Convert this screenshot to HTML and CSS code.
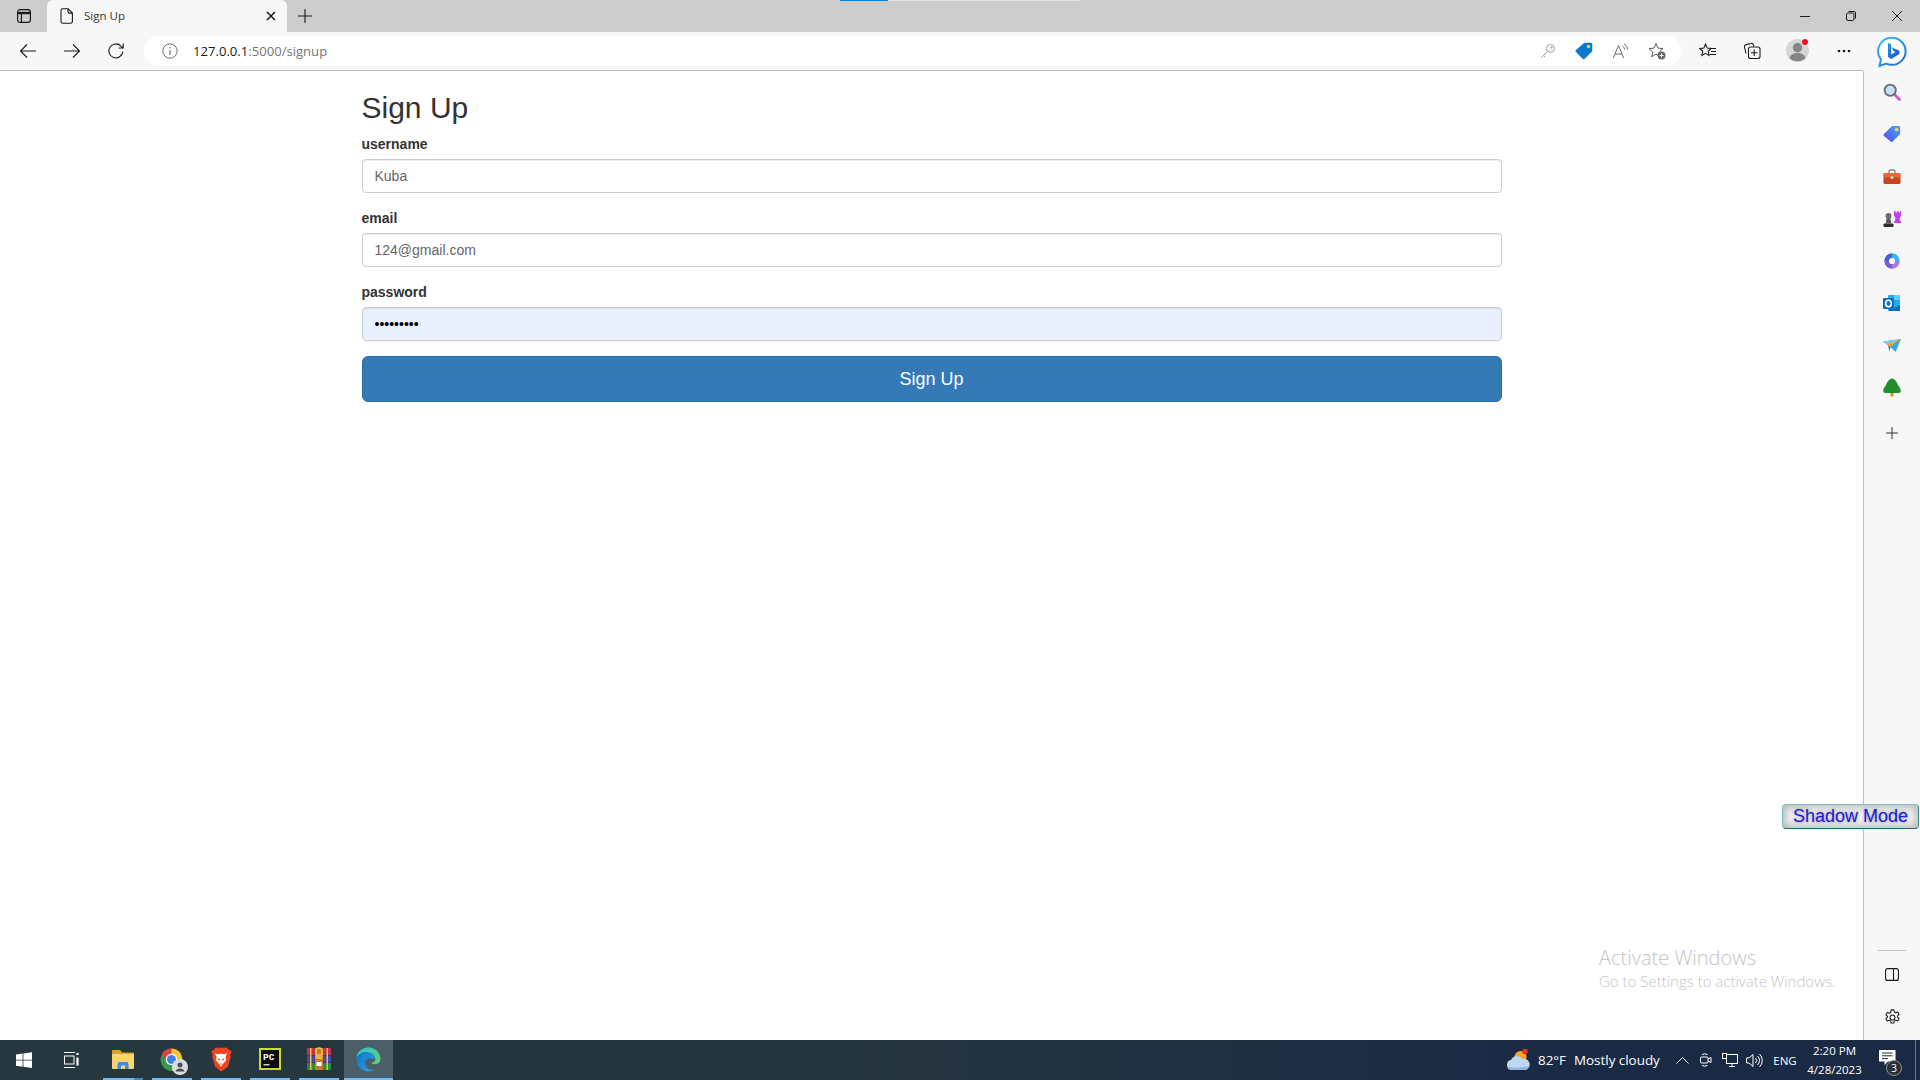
FILE: index.html
```html
<!DOCTYPE html>
<html lang="en">
<head>
<meta charset="utf-8">
<title>Sign Up</title>
<link rel="stylesheet" href="styles.css">
</head>
<body>
<div class="window">

  <header class="tabstrip">
    <div class="progress"><span class="progress-done"></span><span class="progress-rest"></span></div>
    <div class="tab-toggle">
      <svg width="16" height="16" viewBox="0 0 16 16" fill="none" stroke="#1a1a1a" stroke-width="1.2"><rect x="1.6" y="1.6" width="12.8" height="12.8" rx="2.4"/><path d="M1.6 5h12.8" stroke-width="2.4"/><path d="M5.4 5v9.4"/></svg>
    </div>
    <div class="tab">
      <svg class="tab-file" width="14" height="16" viewBox="0 0 14 16" fill="none" stroke="#1a1a1a" stroke-width="1.1"><path d="M2.6.8h5.6L12.4 5v8.6a1.6 1.6 0 0 1-1.6 1.6H2.6A1.6 1.6 0 0 1 1 13.6V2.4A1.6 1.6 0 0 1 2.6.8z"/><path d="M8 1v2.8A1.3 1.3 0 0 0 9.300 5.100h3"/></svg>
      <span class="tab-title">Sign Up</span>
      <svg class="tab-close" width="10" height="10" viewBox="0 0 10 10" stroke="#1a1a1a" stroke-width="1.5"><path d="M1 1l8 8M9 1l-8 8"/></svg>
    </div>
    <div class="tab-new">
      <svg width="16" height="16" viewBox="0 0 16 16" stroke="#1a1a1a" stroke-width="1.1"><path d="M8 1v14M1 8h14"/></svg>
    </div>
    <div class="window-controls">
      <svg width="46" height="12" viewBox="0 0 12 12" stroke="#1a1a1a" stroke-width="1"><path d="M1 6.500h10"/></svg>
      <svg width="46" height="12" viewBox="0 0 12 12" fill="none" stroke="#1a1a1a" stroke-width="1"><rect x="1.500" y="3" width="7.500" height="7.500" rx="1.500"/><path d="M3.500 1.500h5.500a1.500 1.500 0 0 1 1.500 1.500v5.500"/></svg>
      <svg width="46" height="12" viewBox="0 0 12 12" stroke="#1a1a1a" stroke-width="1"><path d="M1 1l10 10M11 1L1 11"/></svg>
    </div>
  </header>

  <div class="toolbar">
    <div class="toolbar-main">
      <div class="tool">
        <svg width="18" height="16" viewBox="0 0 18 16" fill="none" stroke="#1a1a1a" stroke-width="1.1"><path d="M17 8H1.500M8 1.500L1.500 8 8 14.500"/></svg>
      </div>
      <div class="tool">
        <svg width="18" height="16" viewBox="0 0 18 16" fill="none" stroke="#1a1a1a" stroke-width="1.1"><path d="M1 8h15.500M10 1.500L16.500 8 10 14.500"/></svg>
      </div>
      <div class="tool">
        <svg width="18" height="18" viewBox="0 0 18 18" fill="none" stroke="#1a1a1a" stroke-width="1.1"><path d="M15.800 9.500A7 7 0 1 1 14 4.200L16 6"/><path d="M16.200 1.500V6h-4.500"/></svg>
      </div>
      <div class="address">
        <svg class="addr-info" width="16" height="16" viewBox="0 0 16 16" fill="none" stroke="#707070" stroke-width="1"><circle cx="8" cy="8" r="7.200"/><path d="M8 7v5M8 4v1.400" stroke-width="1.200"/></svg>
        <span class="url"><span class="url-host">127.0.0.1</span>:5000/signup</span>
        <div class="addr-icons">
          <span class="addr-icon">
            <svg width="16" height="16" viewBox="0 0 16 16" fill="none" stroke="#9a9a9a" stroke-width="1"><circle cx="10.500" cy="5.500" r="4"/><circle cx="11.500" cy="4.500" r=".7"/><path d="M7.500 8.500L1.500 14.500M3.500 12.500l1.500 1.500"/></svg>
          </span>
          <span class="addr-icon">
            <svg width="18" height="18" viewBox="0 0 18 18"><path d="M9.800.800h6a1.500 1.500 0 0 1 1.500 1.500v6a2 2 0 0 1-.6 1.400l-7 7a1.500 1.500 0 0 1-2.100 0L1 10.100a1.500 1.500 0 0 1 0-2.100l7.400-6.600a2 2 0 0 1 1.400-.6z" fill="#0a78d0"/><circle cx="13.500" cy="4.500" r="1.700" fill="#ffd23f"/></svg>
          </span>
          <span class="addr-icon">
            <svg width="16" height="16" viewBox="0 0 16 16" fill="none" stroke="#6a6a6a" stroke-width="1"><path d="M.3 15L5.500 2.500 10.700 15M2 11h7"/><path d="M9.500 3a4.500 4.500 0 0 1 2.200 3.700M11 .8a7 7 0 0 1 3.700 6"/></svg>
          </span>
          <span class="addr-icon">
            <svg width="18" height="18" viewBox="0 0 18 18" fill="none"><path d="M8 1.500l2 4.600 5 .5-3.700 3.300 1 4.800L8 12.200l-4.300 2.500 1-4.800L1 6.600l5-.5z" stroke="#5a5a5a" stroke-width="1"/><circle cx="13.500" cy="13.500" r="4" fill="#6a6a6a"/><path d="M13.500 11.500v4M11.500 13.500h4" stroke="#fff" stroke-width="1"/></svg>
          </span>
        </div>
      </div>
      <div class="tool">
        <svg width="18" height="16" viewBox="0 0 18 16" fill="none" stroke="#1a1a1a" stroke-width="1.100"><path d="M6.500 1.200l1.700 3.900 4 .4-3 2.800.9 4.100-3.600-2.100-3.600 2.100.9-4.100-3-2.800 4-.4z"/><path d="M12 5.500h5M12 8.500h5M11 11.500h6"/></svg>
      </div>
      <div class="tool">
        <svg width="18" height="18" viewBox="0 0 18 18" fill="none" stroke="#1a1a1a" stroke-width="1.100"><path d="M3 11.500L1.500 5a2 2 0 0 1 1.500-2.400l5-1.100a2 2 0 0 1 2.400 1.400l.4 1.500"/><rect x="5.500" y="5" width="11.500" height="11.500" rx="2"/><path d="M11.200 7.500v6.500M8 10.800h6.500"/></svg>
      </div>
      <div class="tool tool-wide">
        <span class="avatar">
          <svg width="23" height="23" viewBox="0 0 23 23"><circle cx="11.500" cy="11.500" r="11.500" fill="#d6d6d6"/><circle cx="11.500" cy="8.800" r="4.700" fill="#858585"/><path d="M3.500 19c1-3.500 4-5 8-5s7 1.500 8 5a11.500 11.500 0 0 1-16 0z" fill="#858585"/></svg>
          <span class="avatar-dot"></span>
        </span>
      </div>
      <div class="tool tool-more">
        <svg width="14" height="4" viewBox="0 0 14 4" fill="#1a1a1a"><circle cx="2" cy="2" r="1.300"/><circle cx="7" cy="2" r="1.300"/><circle cx="12" cy="2" r="1.300"/></svg>
      </div>
    </div>
    <div class="toolbar-bing">
      <svg width="32" height="32" viewBox="0 0 32 32" fill="none">
        <defs>
          <linearGradient id="bingRing" x1="0" y1="0" x2="1" y2="1"><stop offset="0" stop-color="#35c1f1"/><stop offset="1" stop-color="#1b66d8"/></linearGradient>
          <linearGradient id="bingB" x1="0" y1="0" x2="1" y2="1"><stop offset="0" stop-color="#1b9de2"/><stop offset="1" stop-color="#2548d8"/></linearGradient>
        </defs>
        <path d="M16 1.800a13.600 13.600 0 0 1 13.600 13.500A13.600 13.600 0 0 1 16 28.800c-2 0-4-.4-5.700-1.200L3.500 30l1.500-6.400A13.500 13.500 0 0 1 16 1.800z" fill="#fff" stroke="url(#bingRing)" stroke-width="2"/>
        <path d="M12 7l3.200 1.200v10.300l4.400-2.600-2.300-1-1.300-3.400 7.300 3.100v3.300l-8.100 5-3.200-1.900z" fill="url(#bingB)"/>
      </svg>
    </div>
  </div>

  <div class="body-row">
    <main class="page">
      <div class="container">
        <h2 class="page-title">Sign Up</h2>
        <form class="signup-form">
          <div class="form-group">
            <label class="form-label" for="username">username</label>
            <input class="form-control" id="username" type="text" value="Kuba">
          </div>
          <div class="form-group">
            <label class="form-label" for="email">email</label>
            <input class="form-control" id="email" type="text" value="124@gmail.com">
          </div>
          <div class="form-group">
            <label class="form-label" for="password">password</label>
            <input class="form-control form-control-filled" id="password" type="password" value="123456789">
          </div>
          <button class="btn-submit" type="button">Sign Up</button>
        </form>
      </div>
      <div class="watermark">
        <div class="watermark-title">Activate Windows</div>
        <div class="watermark-sub">Go to Settings to activate Windows.</div>
      </div>
    </main>

    <aside class="sidebar">
      <div class="side-item">
        <svg width="18" height="18" viewBox="0 0 18 18"><path d="M11 11l5.500 5.500" stroke="#d34fd6" stroke-width="2.600" stroke-linecap="round"/><circle cx="7.200" cy="7.200" r="5.600" fill="#bfe3f5" stroke="#6b6b6b" stroke-width="1.800"/></svg>
      </div>
      <div class="side-item">
        <svg width="18" height="18" viewBox="0 0 18 18"><defs><linearGradient id="tagG" x1="1" y1="0" x2="0" y2="1"><stop offset="0" stop-color="#4aa5f5"/><stop offset="1" stop-color="#4a4cf0"/></linearGradient></defs><path d="M10 1h6a1.200 1.200 0 0 1 1.200 1.200v6a2 2 0 0 1-.6 1.400l-7 7a1.300 1.300 0 0 1-1.900 0L1 10.900a1.300 1.300 0 0 1 0-1.900l7.600-7.400A2 2 0 0 1 10 1z" fill="url(#tagG)"/><circle cx="13.600" cy="4.600" r="1.800" fill="#ffd23f"/></svg>
      </div>
      <div class="side-item">
        <svg width="18" height="16" viewBox="0 0 18 16"><path d="M6 4V2.500A1.500 1.500 0 0 1 7.500 1h3A1.500 1.500 0 0 1 12 2.500V4" fill="none" stroke="#8a8a8a" stroke-width="1.400"/><rect x=".5" y="4" width="17" height="11" rx="1.500" fill="#c5461f"/><rect x=".5" y="4" width="17" height="4.500" rx="1.500" fill="#e36a33"/><circle cx="9" cy="8.500" r="1.500" fill="#d9d9d9"/></svg>
      </div>
      <div class="side-item">
        <svg width="18" height="18" viewBox="0 0 18 18"><path d="M11 1h1.500v1.500h1.500V1h1.500v1.500H17V1h1v5l-1.200 1.200v3.800H18v2h-7v-2h1.200V7.200L11 6z" fill="#c43df0"/><circle cx="5.500" cy="6" r="3" fill="#6d6d6d"/><path d="M3.500 8.500h4l.7 5H2.800z" fill="#5a5a5a"/><rect x=".5" y="13.500" width="10" height="3.500" rx="1" fill="#2f2f2f"/></svg>
      </div>
      <div class="side-item">
        <svg width="18" height="18" viewBox="0 0 18 18" fill="none"><path d="M9 3.600A5.400 5.400 0 0 0 3.600 9" stroke="#4a5fd0" stroke-width="4.600"/><path d="M9 3.600A5.400 5.400 0 0 1 14.400 9" stroke="#33b6ea" stroke-width="4.600"/><path d="M14.400 9A5.400 5.400 0 0 1 9 14.400" stroke="#a67ae0" stroke-width="4.600"/><path d="M9 14.400A5.400 5.400 0 0 1 3.600 9" stroke="#7a5cd8" stroke-width="4.600"/></svg>
      </div>
      <div class="side-item">
        <svg width="18" height="18" viewBox="0 0 18 18"><rect x="5" y="1" width="12" height="16" rx="1" fill="#28a8ea"/><rect x="11" y="1" width="6" height="5" fill="#50d9ff"/><path d="M6 11l5.500 3 5.500-3v5.500a.500.500 0 0 1-.5.500H6z" fill="#0a6cbf"/><rect x="0" y="4" width="11" height="11" rx="1" fill="#0f6fc6"/><ellipse cx="5.500" cy="9.500" rx="2.800" ry="3.200" fill="none" stroke="#fff" stroke-width="1.500"/></svg>
      </div>
      <div class="side-item">
        <svg width="18" height="16" viewBox="0 0 18 16"><path d="M0 3.500L18 1l-5.500 13-5-5z" fill="#35a7ec"/><path d="M18 1L7.500 9l-1 4.500-1.500-6z" fill="#1b78c9"/><path d="M0 3.500L18 1 5 7.500z" fill="#7ccaf5"/><path d="M4 6.500L18 1 7 9z" fill="#f5a623"/></svg>
      </div>
      <div class="side-item">
        <svg width="18" height="19" viewBox="0 0 18 19"><path d="M9 .5c2.500 0 5 3.800 6 6.500 1.500 2 2.800 4 2.800 6 0 1.200-1 2-2.300 2H2.500C1.200 15 .2 14.200.2 13c0-2 1.300-4 2.800-6C4 4.300 6.500.5 9 .5z" fill="#1f8f2e"/><rect x="7.500" y="15" width="3" height="3.500" fill="#e08a1a"/></svg>
      </div>
      <div class="side-item side-add">
        <svg width="12" height="12" viewBox="0 0 12 12" stroke="#333" stroke-width="1"><path d="M6 0v12M0 6h12"/></svg>
      </div>
      <div class="side-bottom">
        <div class="side-divider"></div>
        <div class="side-item">
          <svg width="14" height="13" viewBox="0 0 14 13" fill="none" stroke="#1a1a1a" stroke-width="1.100"><rect x=".6" y=".6" width="12.800" height="11.800" rx="2"/><path d="M8.500 .6v11.800"/></svg>
        </div>
        <div class="side-item side-gear">
          <svg width="17" height="17" viewBox="0 0 16 16" fill="none" stroke="#1a1a1a" stroke-width="1"><circle cx="8" cy="8" r="2.300"/><path d="M6.700 .8h2.600l.4 2 1.300.7 1.900-.7 1.300 2.300-1.500 1.300v1.200l1.500 1.300-1.300 2.300-1.900-.7-1.300.7-.4 2H6.700l-.4-2-1.300-.7-1.900.7-1.300-2.300 1.500-1.300V6.900L1.800 5.600l1.300-2.300 1.900.7 1.300-.7z" stroke-linejoin="round"/></svg>
        </div>
      </div>
    </aside>
    <div class="shadow-mode">Shadow Mode</div>
  </div>

  <footer class="taskbar">
    <div class="task-left">
      <div class="task-sys">
        <svg width="16" height="16" viewBox="0 0 16 16" fill="#fff"><path d="M0 2.400l6.600-.9v6.200H0zM7.400 1.400L16 .2v7.500H7.400zM0 8.500h6.600v6.200L0 13.800zM7.400 8.500H16v7.400l-8.600-1.200z"/></svg>
      </div>
      <div class="task-sys">
        <svg width="16" height="16" viewBox="0 0 16 16" fill="none" stroke="#fff" stroke-width="1"><path d="M0 .5h11M0 15.500h11"/><rect x=".5" y="4" width="9.500" height="8"/><path d="M13.500 1v2M13.500 5.500v8" stroke-width="2.200"/></svg>
      </div>
      <div class="task-app task-app-split">
        <svg width="22" height="19" viewBox="0 0 22 19"><path d="M0 1a1 1 0 0 1 1-1h7l2 2.500h11a1 1 0 0 1 1 1V5H0z" fill="#d9a520"/><path d="M0 4h22v14a1 1 0 0 1-1 1H1a1 1 0 0 1-1-1z" fill="#fbd66a"/><path d="M5.500 19v-5l1-2h9l1 2v5h-3.500v-3.500H9V19z" fill="#3a8fe0"/></svg>
      </div>
      <div class="task-app">
        <span class="chrome-icon">
          <svg width="25" height="25" viewBox="0 0 25 25"><path d="M12.500 12.500L3 7a11.500 11.500 0 0 1 9.500-5.500c4.500 0 8 2 10 5.500z" fill="#d8453a"/><path d="M12.500 12.500h11a11.500 11.500 0 0 1-11 11.500z" fill="#f6c63a"/><path d="M12.500 1.500A11.500 11.500 0 0 1 23.500 12.500h-11z" fill="#f6c63a"/><path d="M12.500 1.500A11 11 0 0 0 3 7l4.500 8z" fill="#d8453a"/><path d="M3 7a11.500 11.500 0 0 0 9.500 17l4-7-9-2z" fill="#3a9a4d"/><circle cx="12.500" cy="12.500" r="5.800" fill="#fff"/><circle cx="12.500" cy="12.500" r="4.500" fill="#3f7fe6"/></svg>
          <svg class="chrome-badge" width="16" height="16" viewBox="0 0 16 16"><circle cx="8" cy="8" r="8" fill="#d8dce0"/><circle cx="8" cy="6" r="2.500" fill="#4a4f55"/><path d="M3.500 12.500c.5-2 2.200-3 4.500-3s4 1 4.500 3z" fill="#4a4f55"/></svg>
        </span>
      </div>
      <div class="task-app">
        <svg width="22" height="25" viewBox="0 0 22 25"><path d="M5 .8h12l2 2.500 2.500.5-.5 3-1 1 .8 2-3 10L11 24.500 5.200 19.800l-3-10 .8-2-1-1-.5-3L4 3.300z" fill="#f0431e"/><path d="M11 6.500l3 .8 3-1-1.500 4 .5 3-3 3.500-2 3-2-3-3-3.500.5-3L5 6.300l3 1z" fill="#fff"/><path d="M8 12l2 1M14 12l-2 1M10 17h2" stroke="#f0431e" stroke-width="1.200"/></svg>
      </div>
      <div class="task-app">
        <svg class="pycharm" width="22" height="22" viewBox="0 0 22 22"><rect width="22" height="22" fill="#c9d93a"/><rect x="2" y="2" width="18" height="18" fill="#0b0b0b"/><text class="pycharm-text" x="4" y="12">PC</text><rect x="4.500" y="16" width="6" height="1.500" fill="#ccc"/></svg>
      </div>
      <div class="task-app">
        <svg width="24" height="24" viewBox="0 0 24 24"><rect y="1" width="24" height="7" rx="1" fill="#c2304a"/><rect y="8.500" width="24" height="7" fill="#4a45a8"/><rect y="16" width="24" height="7" rx="1" fill="#2a8a3e"/><rect x="8" y="1" width="8" height="22" fill="#c97a2a"/><rect x="3" y="1" width="1.500" height="22" fill="#e6c04a"/><rect x="19.500" y="1" width="1.500" height="22" fill="#e6c04a"/><path d="M9 8V4a3 3 0 0 1 6 0v4" fill="none" stroke="#f0c24a" stroke-width="1.500"/><rect x="8.500" y="7" width="7" height="5" fill="#f0b23a"/><rect x="9.500" y="15" width="5" height="4" fill="#fff"/></svg>
      </div>
      <div class="task-app task-app-active">
        <svg width="25" height="25" viewBox="0 0 25 25"><defs><linearGradient id="edgeB" x1="0" y1="0" x2="1" y2="1"><stop offset="0" stop-color="#0d6fbf"/><stop offset="1" stop-color="#2fa3e8"/></linearGradient><linearGradient id="edgeG" x1="0" y1="0" x2="1" y2="1"><stop offset="0" stop-color="#2fc3d8"/><stop offset="1" stop-color="#5ed36a"/></linearGradient></defs><path d="M12.500.5A12 12 0 0 0 .5 12.500c0 6.600 5.300 12 12 12 2.800 0 5.300-.9 7.300-2.500-4 1.500-9.700.5-10.800-5-.5-2.800 1.500-5.500 4.800-5.500h6c.5-5-2.800-11.500-7.300-11.500z" fill="url(#edgeB)"/><path d="M12.500.5c-6 0-11 4-12 9.500 2.500-3.500 6-5 9.500-5 6 0 9.500 3.500 9.500 7.500 0 2-2.300 3-4.300 3 .5 1 2 1.700 4 1.700 3.500 0 5.300-2.500 5.300-5.200C24.500 5.500 19 .5 12.500.5z" fill="url(#edgeG)"/></svg>
      </div>
    </div>
    <div class="tray">
      <div class="tray-weather">
        <svg class="weather-icon" width="24" height="24" viewBox="0 0 24 24"><circle cx="14.500" cy="9" r="6" fill="#f5a623"/><circle cx="19" cy="3.500" r="2.800" fill="#d8352a"/><path d="M6 22a5 5 0 0 1-1-9.900A6.500 6.500 0 0 1 16.500 11a5.500 5.500 0 0 1 3 11z" fill="#bcd9f0"/><path d="M1.500 18c3 2 14 2.500 21.500 0-.6 2.500-2 4-3.500 4H6c-2 0-3.800-1.500-4.500-4z" fill="#8fb6dc"/></svg>
        <span class="tray-temp">82°F</span>
        <span class="tray-cond">Mostly cloudy</span>
      </div>
      <div class="tray-cell">
        <svg width="13" height="7" viewBox="0 0 13 7" fill="none" stroke="#fff" stroke-width="1"><path d="M.5 6.500l6-6 6 6"/></svg>
      </div>
      <div class="tray-cell">
        <svg width="12" height="16" viewBox="0 0 12 16" fill="none" stroke="#fff" stroke-width="1"><path d="M2 2.500a6 6 0 0 1 5.500 0M2 13.500a6 6 0 0 0 5.500 0"/><rect x=".5" y="5" width="7.500" height="6" rx="1"/><path d="M8 7l3-1.500v5L8 9"/></svg>
      </div>
      <div class="tray-cell">
        <svg width="16" height="15" viewBox="0 0 16 15" fill="none" stroke="#fff" stroke-width="1"><rect x="4.500" y="1.500" width="11" height="9"/><rect x=".5" y=".5" width="4" height="5" fill="#1b2a44"/><path d="M10 10.500v3M7 13.500h6"/></svg>
      </div>
      <div class="tray-cell tray-cell-vol">
        <svg width="17" height="15" viewBox="0 0 17 15" fill="none" stroke="#fff" stroke-width="1"><path d="M.5 5v5h2.500l4 3.500v-12L3 5z"/><path d="M9.500 5a3.500 3.500 0 0 1 0 5M11.500 3a6 6 0 0 1 0 9M13.500 1a9 9 0 0 1 0 13"/></svg>
      </div>
      <div class="tray-cell tray-eng">ENG</div>
      <div class="tray-clock"><span>2:20 PM</span><span>4/28/2023</span></div>
      <div class="tray-notify">
        <svg width="17" height="16" viewBox="0 0 17 16"><path d="M0 0h16.500v11.500H9L5.500 15v-3.500H0z" fill="#fff"/><path d="M3 3h10.500M3 5.800h10.500M3 8.600h6" stroke="#1b2a44" stroke-width="1"/></svg>
        <span class="notify-badge">3</span>
      </div>
      <div class="show-desktop"></div>
    </div>
  </footer>
</div>
</body>
</html>
```

FILE: styles.css
```css
* { box-sizing: border-box; }
html, body { margin: 0; height: 100%; overflow: hidden; }
body { font-family: "Liberation Sans", Arial, sans-serif; font-size: 14px; color: #333; background: #fff; }

.window { display: flex; flex-direction: column; height: 100vh; position: relative; }

/* tab strip */
.tabstrip { height: 32px; flex: none; background: #ccc; display: flex; align-items: flex-end; position: relative; }
.progress { position: absolute; top: 0; left: 840px; display: flex; height: 1px; }
.progress-done { width: 48px; background: #0a7bd6; }
.progress-rest { width: 193px; background: #e2e2e2; }
.tab-toggle { width: 47px; height: 32px; display: flex; align-items: center; justify-content: center; flex: none; }
.tab { width: 240px; height: 32px; background: #f7f7f7; border-radius: 6px 6px 0 0; display: flex; align-items: center; padding: 0 11px 0 13px; flex: none; }
.tab-file { flex: none; }
.tab-title { font-family: "Open Sans", sans-serif; font-size: 11.500px; line-height: 30px; height: 31px; color: #333; margin-left: 10px; flex: 1; }
.tab-new { width: 36px; height: 32px; display: flex; align-items: center; justify-content: center; flex: none; }
.window-controls { margin-left: auto; height: 32px; display: flex; align-items: center; }

/* toolbar */
.toolbar { height: 39px; flex: none; display: flex; background: #f7f7f7; }
.toolbar-main { flex: 1; display: flex; align-items: center; padding-left: 6px; padding-bottom: 1px; border-bottom: 1px solid #bfbfbf; }
.tool { width: 44px; height: 30px; display: flex; align-items: center; justify-content: center; flex: none; }
.tool-wide { width: 46px; }
.tool-more { width: 43px; padding-left: 4px; }
.address { flex: 1; height: 30px; margin: 0 5px 0 6px; background: #fff; border-radius: 15px; display: flex; align-items: center; padding: 0 5px 0 18px; }
.addr-info { flex: none; }
.url { font-family: "Open Sans", sans-serif; font-size: 13.100px; color: #757575; margin-left: 15px; }
.url-host { color: #1a1a1a; }
.addr-icons { margin-left: auto; display: flex; margin-right: 1px; }
.addr-icon { width: 36.300px; height: 30px; display: flex; align-items: center; justify-content: center; }
.avatar { position: relative; display: flex; }
.avatar-dot { position: absolute; top: 0; right: 1px; width: 6px; height: 6px; border-radius: 50%; background: #e81123; }
.toolbar-bing { width: 57px; flex: none; display: flex; align-items: center; justify-content: center; }

/* body */
.body-row { flex: 1; display: flex; min-height: 0; position: relative; }
.page { flex: 1; position: relative; background: #fff; min-width: 0; }
.container { width: 1170px; margin: 0 auto; padding: 0 15px; }
.page-title { font-size: 30px; font-weight: 500; line-height: 33px; margin: 20px 0 10px; color: #333; }
.form-group { margin-bottom: 15px; }
.form-label { display: inline-block; font-weight: 700; line-height: 20px; margin-bottom: 5px; color: #333; }
.form-control { display: block; width: 100%; height: 34px; padding: 6px 12px; font: 14px/20px "Liberation Sans", Arial, sans-serif; color: #666; background: #fff; border: 1px solid #ccc; border-radius: 4px; box-shadow: inset 0 1px 1px rgba(0,0,0,.075); outline: 0; }
.form-control-filled { background: #e8f0fe; color: #000; }
.btn-submit { display: block; width: 100%; height: 46px; padding: 10px 16px; font: 18px/25px "Liberation Sans", Arial, sans-serif; color: #fff; background: #337ab7; border: 1px solid #2e6da4; border-radius: 6px; }

.watermark { position: absolute; left: 1599px; bottom: 49px; font-family: "Open Sans", sans-serif; color: #c4c4c4; white-space: nowrap; }
.watermark-title { font-size: 20px; font-weight: 300; line-height: 27px; }
.watermark-sub { font-size: 15px; font-weight: 300; line-height: 20px; }

/* right sidebar */
.sidebar { width: 57px; flex: none; background: #f7f7f7; border-left: 1px solid #bfbfbf; display: flex; flex-direction: column; align-items: center; }
.side-item { height: 42.250px; width: 100%; display: flex; align-items: center; justify-content: center; flex: none; }
.side-add { margin-top: 3px; }
.side-gear { padding-top: 2px; }
.side-bottom { margin-top: auto; width: 100%; display: flex; flex-direction: column; align-items: center; padding-bottom: 2px; }
.side-divider { width: 28px; height: 1px; background: #c4c4c4; margin-bottom: 3px; }

.shadow-mode { position: absolute; right: 1px; top: 733px; width: 137px; height: 25px; display: flex; align-items: center; justify-content: center; background: #f2f2f2; border: 1px solid #7fbcbc; border-bottom-color: #1f6f6f; border-right-color: #3f8f8f; border-radius: 4px; box-shadow: inset 0 0 8px 2px #b4b4b4; color: #1c1cdc; font-size: 18px; text-shadow: 0 0 3px #8a8a8a; }

/* taskbar */
.taskbar { height: 40px; flex: none; display: flex; background: linear-gradient(90deg, #26373f 0%, #25353f 45%, #1b2a44 80%, #1b2a44 100%); }
.task-left { display: flex; }
.task-sys { width: 48px; display: flex; align-items: center; justify-content: center; flex: none; }
.task-sys:nth-child(2) { padding-left: 0; }
.task-app { width: 49px; height: 40px; display: flex; align-items: center; justify-content: center; flex: none; position: relative; padding-bottom: 2px; }
.task-app:nth-child(3) { margin-left: 2.500px; }
.task-app::after { content: ""; position: absolute; left: 4.500px; right: 4.500px; bottom: 0; height: 2px; background: #76b9ed; }
.task-app-split::after { background: linear-gradient(90deg, #76b9ed 77%, #4f87b0 77%); }
.task-app-active { background: #4c5f68; }
.task-app-active::after { left: 0; right: 0; }
.chrome-icon { position: relative; display: flex; margin-right: 2px; }
.chrome-badge { position: absolute; right: -4px; bottom: -3px; }
.pycharm-text { font: 700 9.500px "Liberation Mono", monospace; fill: #fff; }

.tray { margin-left: auto; display: flex; color: #fff; font-family: "Open Sans", sans-serif; font-size: 13.400px; }
.tray-weather { width: 170px; display: flex; align-items: center; padding-left: 6px; }
.weather-icon { margin-right: 8px; flex: none; }
.tray-temp { width: 36px; flex: none; }
.tray-cond { white-space: nowrap; }
.tray-cell { width: 24px; display: flex; align-items: center; justify-content: center; }
.tray-cell-vol { width: 25px; }
.tray-eng { width: 34px; font-size: 11.500px; padding-left: 2px; }
.tray-clock { width: 68px; display: flex; flex-direction: column; align-items: center; justify-content: center; font-size: 11.500px; line-height: 19px; padding-right: 1px; }
.tray-notify { width: 46px; position: relative; display: flex; align-items: center; padding: 0 0 4px 10px; }
.notify-badge { position: absolute; left: 17px; top: 20px; width: 16px; height: 16px; border-radius: 50%; background: #2b2f36; border: 1px solid #8a8f96; font-size: 10.500px; line-height: 14px; text-align: center; }
.show-desktop { width: 5px; border-left: 1px solid #6c7683; }
```
